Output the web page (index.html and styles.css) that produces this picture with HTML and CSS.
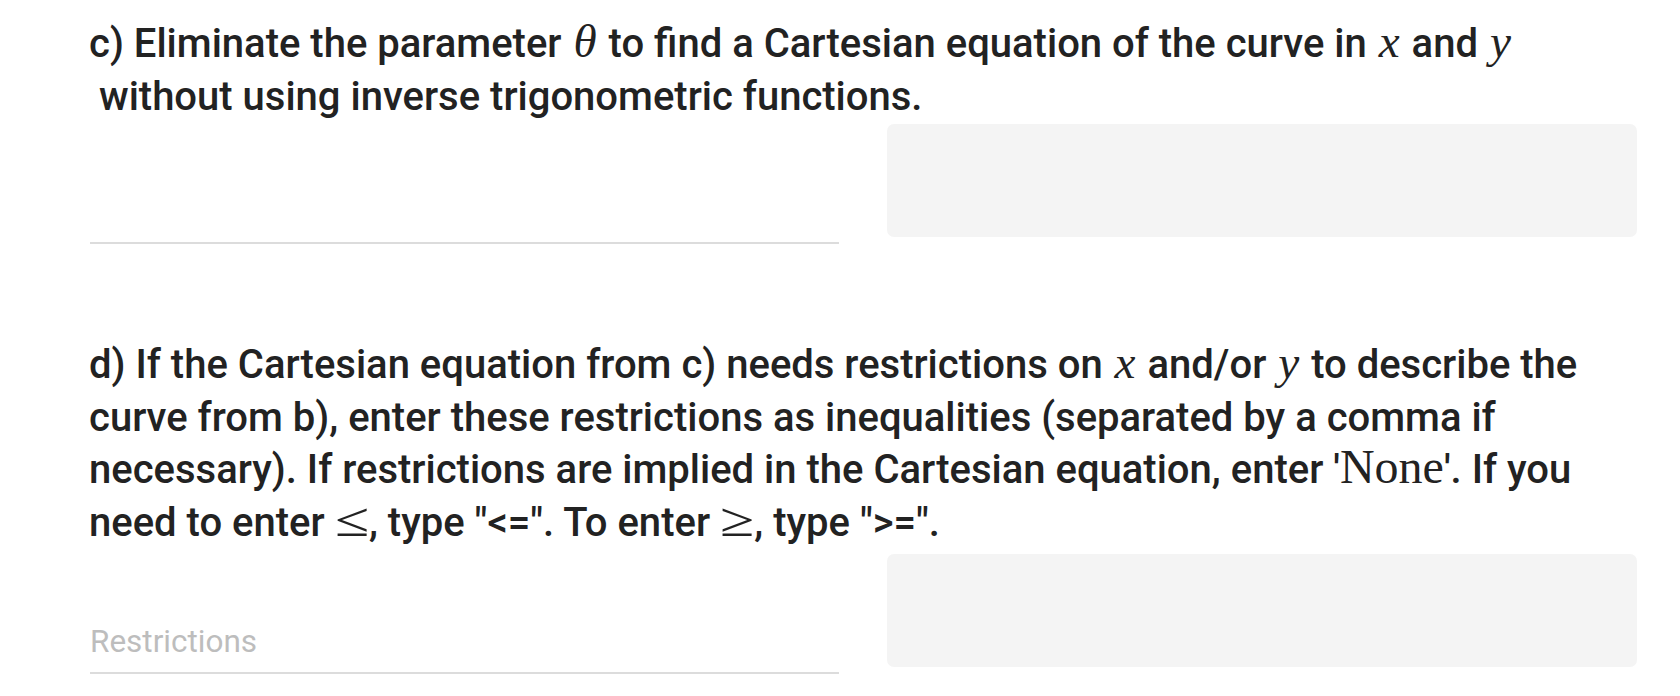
FILE: index.html
```html
<html>
<head>
<meta charset="utf-8">
<link rel="stylesheet" href="styles.css">
</head>
<body>

<div class="sheet">

    <div class="question">
        <p class="prompt">c) Eliminate the parameter <span class="math">θ</span> to find a Cartesian equation of the curve in <span class="math">x</span> and <span class="math">y</span><br>&nbsp;without using inverse trigonometric functions.</p>
        <div class="answer-row">
            <div class="field"><input class="answer" type="text"></div>
            <div class="feedback"></div>
        </div>
    </div>

    <div class="question second">
        <p class="prompt">d) If the Cartesian equation from c) needs restrictions on <span class="math">x</span> and/or <span class="math">y</span> to describe the<br>curve from b), enter these restrictions as inequalities (separated by a comma if<br>necessary). If restrictions are implied in the Cartesian equation, enter '<span class="rm">None</span>'. If you<br>need to enter <span class="rm rel">≤</span>, type "&lt;=". To enter <span class="rm rel">≥</span>, type "&gt;=".</p>
        <div class="answer-row">
            <div class="field"><input class="answer" type="text" placeholder="Restrictions"></div>
            <div class="feedback"></div>
        </div>
    </div>

</div>

</body>
</html>
```

FILE: styles.css
```css
body, html {
    margin:0;
    padding:0;
    background: #fff;
    font-family: Roboto, "Noto Sans", sans-serif;
    color: #222;
}

.sheet {
    padding: 18px 0 0 89px;
    width: 1549px;
}

.prompt {
    margin: 0;
    font-size: 40px;
    font-weight: 500;
    line-height: 52.5px;
    white-space: nowrap;
}

.math {
    font-family: "Liberation Serif", serif;
    font-style: italic;
    font-weight: normal;
    font-size: 1.18em;
    line-height: 0;
    padding: 0 2px;
}

.rm {
    font-family: "Liberation Serif", serif;
    font-weight: normal;
    font-size: 1.2em;
    line-height: 0;
}

.rel {
    display: inline-block;
    transform: scaleX(1.3);
    margin: 0 4px;
}

.answer-row {
    display: grid;
    grid-template-columns: 750px 750px;
    column-gap: 48px;
    align-items: end;
    margin-top: 1px;
}

.second {
    margin-top: 95px;
}

.second .answer-row {
    margin-top: 5px;
}

.field {
    margin-left: 1px;
    border-bottom: 2px solid #dcdcdc;
}

.answer {
    display: block;
    width: 100%;
    height: 40px;
    margin-bottom: 11px;
    border: none;
    outline: none;
    padding: 0;
    background: transparent;
    font-family: Roboto, sans-serif;
    font-size: 31.5px;
    color: #222;
}

.answer::placeholder {
    color: #bdbdbd;
}

.feedback {
    height: 113px;
    margin-bottom: 7px;
    border-radius: 7px;
    background: #f4f4f4;
}
```
